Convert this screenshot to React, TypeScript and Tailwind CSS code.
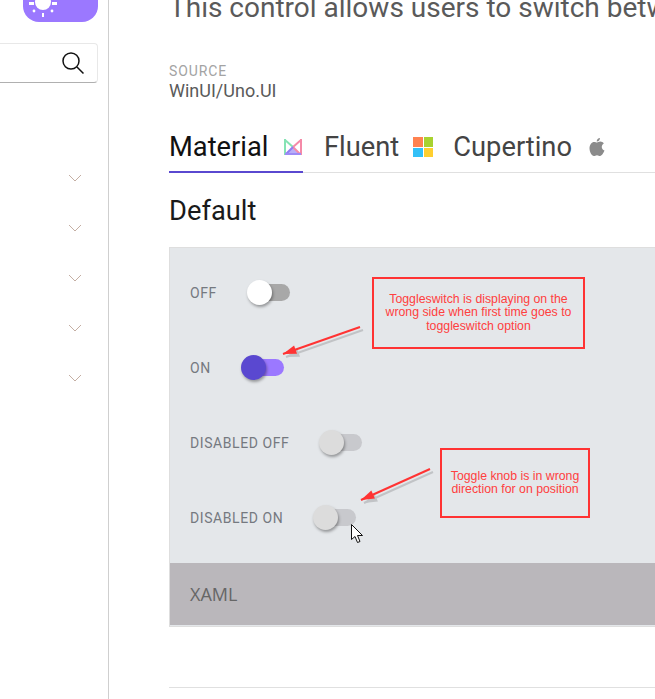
const roboto = "font-['Roboto',sans-serif]";

function Chevron() {
  return (
    <svg width="14" height="8" viewBox="0 0 14 8" className="block">
      <path d="M1 1l6 6 6-6" fill="none" stroke="#c4aea3" strokeWidth="1" />
    </svg>
  );
}

function SunIcon() {
  return (
    <svg width="30" height="22" viewBox="0 0 30 22" className="block">
      <circle cx="15" cy="2" r="8" fill="#fff" />
      <g fill="#fff">
        <rect x="1" y="2" width="5" height="3" />
        <rect x="24" y="2" width="5" height="3" />
        <rect x="14" y="13" width="2" height="4" />
        <circle cx="6" cy="11" r="1.400" />
        <circle cx="24" cy="11" r="1.400" />
      </g>
    </svg>
  );
}

function SearchIcon() {
  return (
    <svg width="24" height="24" viewBox="0 0 24 24" className="block">
      <circle cx="10" cy="10" r="8" fill="none" stroke="#111" strokeWidth="1.500" />
      <path d="M16 16l6.500 6.500" stroke="#111" strokeWidth="1.500" />
    </svg>
  );
}

function MaterialIcon() {
  return (
    <svg width="18" height="18" viewBox="0 0 18 18" className="block">
      <path d="M2 16l7-7 7 7z" fill="#b9aef8" />
      <path d="M1 1v16" stroke="#86e3b4" strokeWidth="2" fill="none" />
      <path d="M1 2l8 7" stroke="#86e3b4" strokeWidth="2" fill="none" />
      <path d="M9 9l7 7" stroke="#f58aa8" strokeWidth="2" fill="none" />
      <path d="M17 1v16" stroke="#f58aa8" strokeWidth="2" fill="none" />
      <path d="M17 2L9 9" stroke="#f58aa8" strokeWidth="2" fill="none" />
      <path d="M9 9l-7 7" stroke="#8f7df2" strokeWidth="2" fill="none" />
      <path d="M1 16h16" stroke="#9d8cf5" strokeWidth="2" fill="none" />
    </svg>
  );
}

function WindowsIcon() {
  return (
    <div className="grid h-5 w-5 grid-cols-2 gap-px">
      <div className="bg-[#ff8250]" />
      <div className="bg-[#a8d22f]" />
      <div className="bg-[#33c0f7]" />
      <div className="bg-[#ffcf2f]" />
    </div>
  );
}

function AppleIcon() {
  return (
    <svg width="16" height="20" viewBox="0 0 16 20" className="block">
      <path
        fill="#8b8b8b"
        d="M11 1c.1 1.900-1.500 3.600-3.300 3.500C7.500 2.700 9.300 1.100 11 1zM8 5.500c.8 0 1.800-.9 3.300-.9 1.300 0 2.700.7 3.500 1.900-3 1.800-2.500 5.900.7 7.100-.8 2-2.600 5.400-4.400 5.400-1.200 0-1.600-.8-3.100-.8s-2 .8-3.100.8C2.700 19 .5 14.900.5 11.300.5 7.500 2.900 4.900 5 4.900c1.300 0 2.300.6 3 .6z"
      />
    </svg>
  );
}

function Toggle({ knob, track }: { knob: string; track: string }) {
  return (
    <div className="relative h-[25px] w-[43px]">
      <div className={`absolute right-0 top-1 h-[17px] w-9 rounded-full ${track}`} />
      <div
        className={`absolute left-0 top-0 h-[25px] w-[25px] rounded-full shadow-[1px_2px_3px_rgba(0,0,0,0.35)] ${knob}`}
      />
    </div>
  );
}

function ToggleRow({ label, knob, track }: { label: string; knob: string; track: string }) {
  return (
    <div className="flex h-[75px] items-center gap-[30px] pl-5">
      <span className="text-sm tracking-[0.58px] text-[#757980]">{label}</span>
      <Toggle knob={knob} track={track} />
    </div>
  );
}

function Note({ className, lines }: { className: string; lines: string[] }) {
  return (
    <div
      className={`absolute flex flex-col items-center justify-center border-2 border-[#ff3333] font-['Liberation_Sans',sans-serif] text-[12.300px] leading-[13.500px] text-[#ff4040] ${className}`}
    >
      {lines.map((line) => (
        <span key={line} className="whitespace-nowrap">
          {line}
        </span>
      ))}
    </div>
  );
}

function Arrow({ x1, y1, x2, y2 }: { x1: number; y1: number; x2: number; y2: number }) {
  const angle = Math.atan2(y2 - y1, x2 - x1);
  const head = 14;
  const spread = 0.32;
  const ax = x2 - head * Math.cos(angle - spread);
  const ay = y2 - head * Math.sin(angle - spread);
  const bx = x2 - head * Math.cos(angle + spread);
  const by = y2 - head * Math.sin(angle + spread);
  const shape = (
    <>
      <path d={`M${x1} ${y1}L${x2} ${y2}`} strokeWidth="2" />
      <path d={`M${x2} ${y2}L${ax} ${ay}L${bx} ${by}z`} strokeWidth="0" />
    </>
  );
  return (
    <>
      <g transform="translate(3 3)" fill="#000" stroke="#000" opacity="0.15">
        {shape}
      </g>
      <g fill="#ff3333" stroke="#ff3333">
        {shape}
      </g>
    </>
  );
}

export default function App() {
  return (
    <div className={`relative flex h-[699px] w-[655px] overflow-hidden bg-white ${roboto}`}>
      <aside className="flex w-[109px] shrink-0 flex-col border-r border-[#cfcfcf]">
        <div className="ml-[23px] flex h-[22px] w-[75px] rounded-b-[16px] bg-[#9b78ff] pl-[5px]">
          <SunIcon />
        </div>
        <div className="mt-[21px] flex h-10 w-[98px] items-center justify-end rounded-r-[4px] border border-l-0 border-[#e8e8e8] border-b-[#b0b0b0] pr-3">
          <SearchIcon />
        </div>
        <div className="mt-[91px] flex flex-col gap-[42px] pl-[68px]">
          <Chevron />
          <Chevron />
          <Chevron />
          <Chevron />
          <Chevron />
        </div>
      </aside>

      <main className="min-w-0 flex-1 pl-[60px]">
        <p className="mt-[-12px] whitespace-nowrap text-[28px] leading-[40px] text-[#5a5a5a]">
          This control allows users to switch between two states
        </p>
        <div className="mt-[35px] text-sm leading-[16px] tracking-[0.9px] text-[#a3a3a3]">SOURCE</div>
        <div className="mt-[2px] text-[18px] leading-[19px] text-[#5a5a5a]">WinUI/Uno.UI</div>

        <div className="mt-[21px] flex h-[52px] items-start border-b border-[#e0e0e0]">
          <div className="flex h-[52px] w-[134px] items-start gap-4 border-b-2 border-[#5a48d0] pt-2">
            <span className="text-[27.300px] leading-[36px] text-[#111]">Material</span>
            <div className="mt-[9px]">
              <MaterialIcon />
            </div>
          </div>
          <span className="ml-[21px] mt-2 text-[27.300px] leading-[36px] text-[#444]">Fluent</span>
          <div className="ml-[14px] mt-4">
            <WindowsIcon />
          </div>
          <span className="ml-5 mt-2 text-[27.300px] leading-[36px] text-[#444]">Cupertino</span>
          <div className="ml-[17px] mt-4">
            <AppleIcon />
          </div>
        </div>

        <h2 className="mt-5 text-[27.300px] leading-[36px] text-[#1a1a1a]">Default</h2>

        <section className="mt-[18px] h-[380px] border border-r-0 border-[#dedede] bg-[#e4e7ea]">
          <div className="pb-2 pt-[7px]">
            <ToggleRow label="OFF" knob="bg-white" track="bg-[#a8a8a8]" />
            <ToggleRow label="ON" knob="bg-[#5a48d0]" track="bg-[#9b78ff]" />
            <ToggleRow label="DISABLED OFF" knob="bg-[#dcdcdc]" track="bg-[#c8c9cd]" />
            <ToggleRow label="DISABLED ON" knob="bg-[#dcdcdc]" track="bg-[#c8c9cd]" />
          </div>
          <div className="flex h-[62px] items-center bg-[#bab7bb] pl-5 font-['Open_Sans',sans-serif] text-[18px] text-[#666]">
            XAML
          </div>
        </section>

        <div className="mt-[60px] border-t border-[#e0e0e0]" />
      </main>

      <Note
        className="left-[372px] top-[277px] h-[72px] w-[213px]"
        lines={["Toggleswitch is displaying on the", "wrong side when first time goes to", "toggleswitch option"]}
      />
      <Note
        className="left-[440px] top-[448px] h-[70px] w-[150px]"
        lines={["Toggle knob is in wrong", "direction for on position"]}
      />

      <svg className="pointer-events-none absolute left-0 top-0" width="655" height="699">
        <Arrow x1={360} y1={327} x2={283} y2={354} />
        <Arrow x1={430} y1={469} x2={361} y2={500} />
        <path
          d="M351.500 524.500v15l3.500-3 2.500 6 2.500-1-2.500-6h5z"
          fill="#fff"
          stroke="#111"
          strokeWidth="1"
        />
      </svg>
    </div>
  );
}
